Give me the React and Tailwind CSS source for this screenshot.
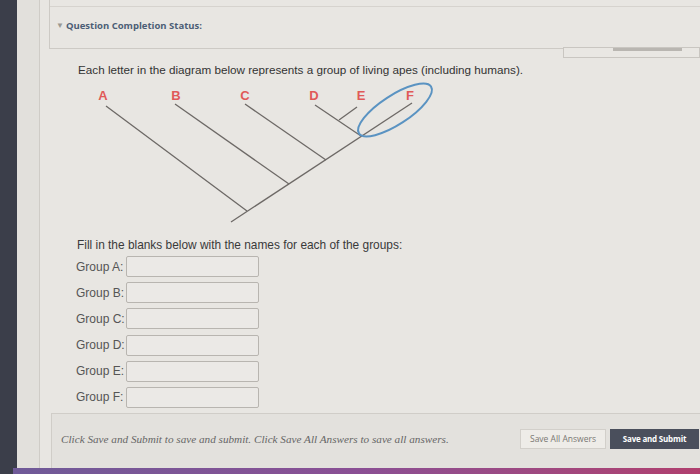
import React from "react";

const groups = ["A", "B", "C", "D", "E", "F"];

function Diagram() {
  const lines = [
    [28, 21, 169, 126],
    [153, 137, 334, 18],
    [97, 19, 211, 99],
    [167, 19, 248, 75],
    [237, 20, 283, 51],
    [279, 22, 261, 35],
  ];
  const letters = [
    ["A", 25],
    ["B", 98],
    ["C", 167],
    ["D", 236],
    ["E", 283],
    ["F", 332],
  ];
  return (
    <svg width="370" height="140" viewBox="0 0 370 140" className="block overflow-visible">
      {lines.map(([x1, y1, x2, y2], i) => (
        <line key={i} x1={x1} y1={y1} x2={x2} y2={y2} stroke="#6d6966" strokeWidth="1.3" />
      ))}
      {letters.map(([t, x]) => (
        <text
          key={t}
          x={x}
          y="15"
          textAnchor="middle"
          fontFamily="'Liberation Sans', Arial, sans-serif"
          fontWeight="700"
          fontSize="13"
          fill="#e05a58"
        >
          {t}
        </text>
      ))}
      <ellipse
        cx="317"
        cy="25"
        rx="43"
        ry="14.5"
        transform="rotate(-33 317 25)"
        fill="none"
        stroke="#5a93c2"
        strokeWidth="2"
      />
    </svg>
  );
}

export default function App() {
  return (
    <div className="w-[700px] h-[474px] overflow-hidden flex flex-col bg-[#3b3e4a] font-['Liberation_Sans',Arial,sans-serif]">
      <div className="flex flex-1 min-h-0">
        <div className="w-[17px] bg-[#3b3e4a]" />
        <div className="w-[23px] bg-[#e2e0dc] border-r border-[#cfccc7]" />
        <div className="flex-1 flex flex-col bg-[#e8e6e2] pl-[9px]">
          <div className="h-[49px] shrink-0 border-l border-b border-[#cdcac5] flex flex-col">
            <div className="h-[7px] border-b border-[#d6d3ce]" />
            <div className="flex items-center pl-[6px] pt-[12px] gap-[2px]">
              <span className="text-[8px] leading-none text-[#9a9892]">▼</span>
              <span className="font-['Open_Sans',sans-serif] font-bold text-[9.5px] text-[#4c5e76]">
                Question Completion Status:
              </span>
            </div>
          </div>
          <div className="flex justify-end -mt-[2px] h-[11px] shrink-0">
            <div className="w-[137px] h-[11px] border border-[#c9c6c1] bg-[#e9e7e3]">
              <div className="ml-[49px] w-[69px] h-[3px] bg-[#b9b6b1]" />
            </div>
          </div>
          <div className="pl-[29px] flex flex-col shrink-0">
            <p className="mt-[4px] text-[11.7px] leading-[16px] text-[#333333]">
              Each letter in the diagram below represents a group of living apes (including humans).
            </p>
            <div className="mt-[7px]">
              <Diagram />
            </div>
            <p className="mt-[12px] text-[11.9px] leading-[16px] text-[#3a3a3a] -ml-[1px]">
              Fill in the blanks below with the names for each of the groups:
            </p>
            <div className="mt-[3px] flex flex-col -ml-[2px]">
              {groups.map((g) => (
                <div key={g} className="h-[26.2px] flex items-start">
                  <span className="w-[50px] h-[21px] flex items-center text-[12px] text-[#555555]">
                    Group {g}:
                  </span>
                  <div className="w-[133px] h-[21px] border border-[#b8b5b0] bg-[#ebe9e6] rounded-[2px]" />
                </div>
              ))}
            </div>
          </div>
          <div className="flex-1" />
          <div className="h-[57px] shrink-0 ml-[2px] border-t border-l border-[#d0cdc8] bg-[#e3e1dd] flex items-center justify-between pr-[1px]">
            <span className="pl-[9px] -mt-[6px] font-['Liberation_Serif',serif] italic text-[11.2px] text-[#666666]">
              Click Save and Submit to save and submit. Click Save All Answers to save all answers.
            </span>
            <div className="flex gap-[4px] -mt-[6px]">
              <div className="w-[86px] h-[20px] flex items-center justify-center border border-[#d2cfca] bg-[#eeece8] font-['Open_Sans',sans-serif] text-[8.5px] text-[#7a7873]">
                Save All Answers
              </div>
              <div className="w-[89px] h-[20px] flex items-center justify-center bg-[#4a4f5c] font-['Open_Sans',sans-serif] font-bold text-[8px] tracking-[-0.2px] text-white">
                Save and Submit
              </div>
            </div>
          </div>
        </div>
      </div>
      <div className="h-[6px] shrink-0 flex">
        <div className="w-[13px] bg-[#3b3e4a]" />
        <div className="flex-1 bg-gradient-to-r from-[#6f5a98] via-[#8a4f94] to-[#b03f6e]" />
      </div>
    </div>
  );
}
